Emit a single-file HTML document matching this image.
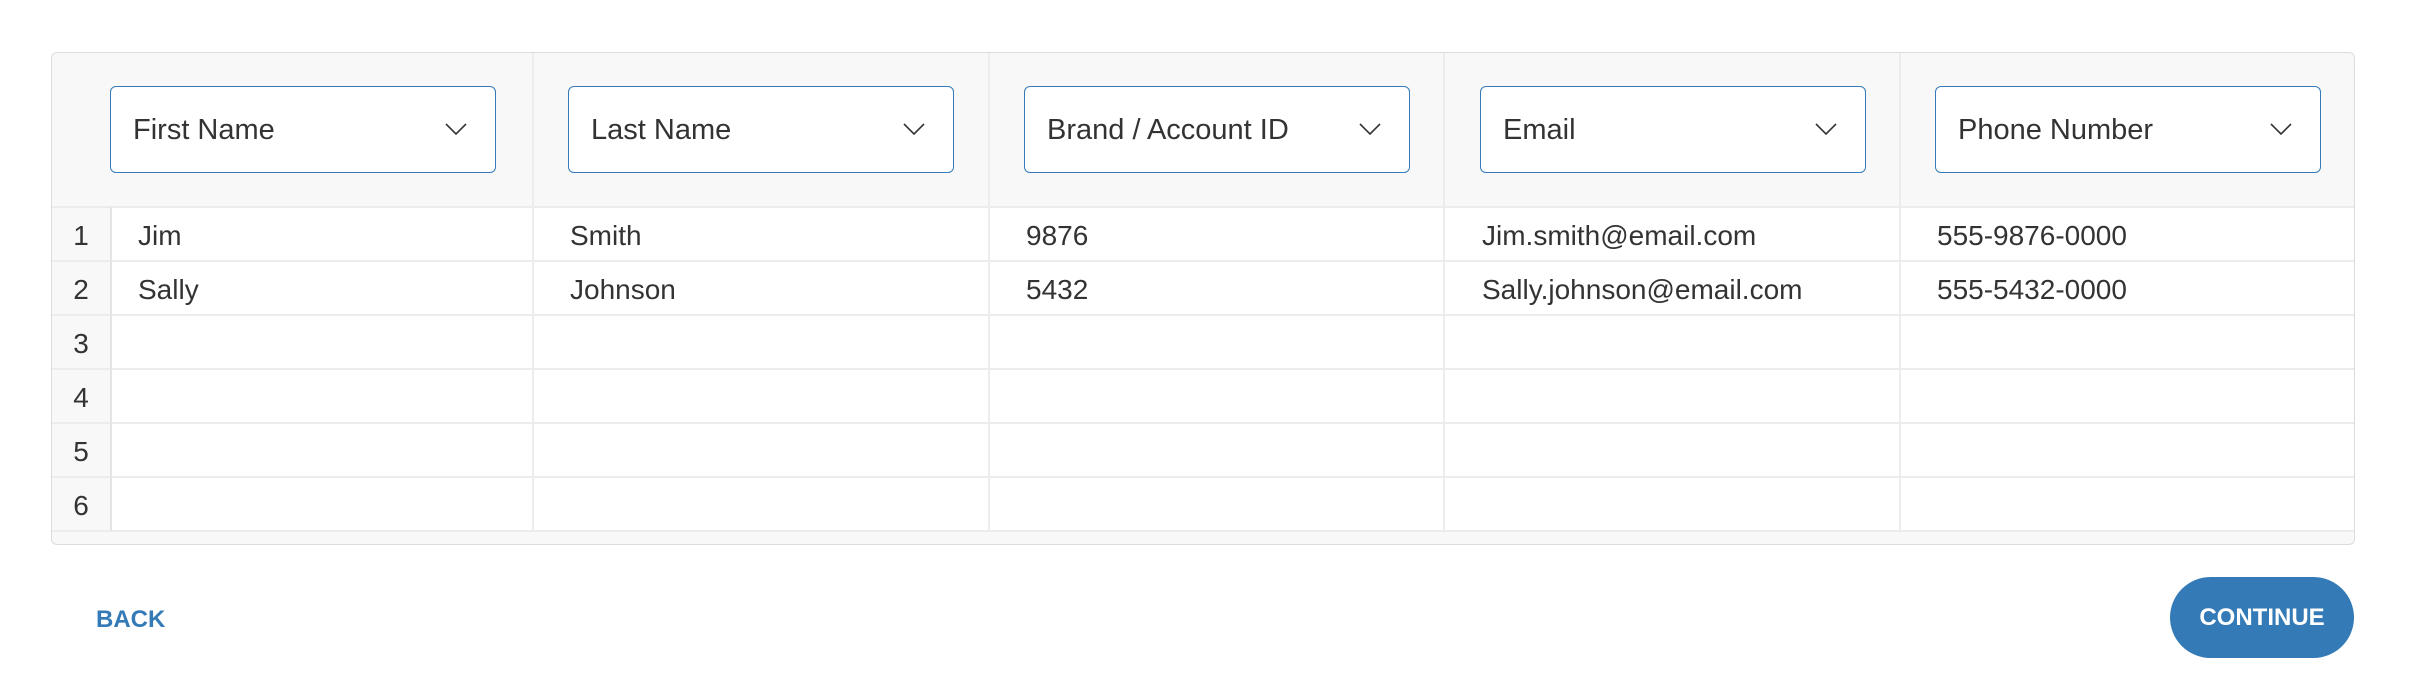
<!DOCTYPE html>
<html><head><style>
body{margin:0;width:2428px;height:684px;background:#fff;font-family:"Liberation Sans",sans-serif;color:#333;position:relative;overflow:hidden}
.tbl{position:absolute;left:51px;top:52px;width:2302px;height:491px;border:1.5px solid #dcdcdc;border-radius:6px;background:#f8f8f8;overflow:hidden}
.a{position:absolute}
.hl{position:absolute;left:0;right:0;height:2px;background:#ececec}
.vl{position:absolute;width:2px;background:#ececec}
.dd{position:absolute;top:33px;width:386px;height:87px;border:1.5px solid #337ab7;border-radius:6px;background:#fff;box-sizing:border-box}
.dd span{position:absolute;left:22px;top:27px;font-size:29px}
.dd svg{position:absolute;right:28px;top:36px}
.cell{position:absolute;font-size:28px}
.num{position:absolute;left:0;width:58px;text-align:center;font-size:28px}
</style></head><body>
<div class="tbl">
 <div class="a" style="left:58px;top:154px;right:0;height:324px;background:#fff"></div>
 <div class="hl" style="top:153px"></div>
 <div class="hl" style="top:207px;left:0"></div>
 <div class="hl" style="top:261px"></div>
 <div class="hl" style="top:315px"></div>
 <div class="hl" style="top:369px"></div>
 <div class="hl" style="top:423px"></div>
 <div class="hl" style="top:477px"></div>
 <div class="vl" style="left:58px;top:154px;height:324px;background:#e4e4e4"></div>
 <div class="vl" style="left:480px;top:0;height:478px"></div>
 <div class="vl" style="left:936px;top:0;height:478px"></div>
 <div class="vl" style="left:1391px;top:0;height:478px"></div>
 <div class="vl" style="left:1847px;top:0;height:478px"></div>

 <div class="dd" style="left:58px"><span>First Name</span><svg width="22" height="12" viewBox="0 0 22 12"><path d="M1 1L11 11L21 1" fill="none" stroke="#333" stroke-width="1.6"/></svg></div>
 <div class="dd" style="left:516px"><span>Last Name</span><svg width="22" height="12" viewBox="0 0 22 12"><path d="M1 1L11 11L21 1" fill="none" stroke="#333" stroke-width="1.6"/></svg></div>
 <div class="dd" style="left:972px"><span>Brand / Account ID</span><svg width="22" height="12" viewBox="0 0 22 12"><path d="M1 1L11 11L21 1" fill="none" stroke="#333" stroke-width="1.6"/></svg></div>
 <div class="dd" style="left:1428px"><span>Email</span><svg width="22" height="12" viewBox="0 0 22 12"><path d="M1 1L11 11L21 1" fill="none" stroke="#333" stroke-width="1.6"/></svg></div>
 <div class="dd" style="left:1883px"><span>Phone Number</span><svg width="22" height="12" viewBox="0 0 22 12"><path d="M1 1L11 11L21 1" fill="none" stroke="#333" stroke-width="1.6"/></svg></div>

 <div class="num" style="top:167px">1</div>
 <div class="num" style="top:221px">2</div>
 <div class="num" style="top:275px">3</div>
 <div class="num" style="top:329px">4</div>
 <div class="num" style="top:383px">5</div>
 <div class="num" style="top:437px">6</div>

 <div class="cell" style="left:86px;top:167px">Jim</div>
 <div class="cell" style="left:518px;top:167px">Smith</div>
 <div class="cell" style="left:974px;top:167px">9876</div>
 <div class="cell" style="left:1430px;top:167px">Jim.smith@email.com</div>
 <div class="cell" style="left:1885px;top:167px">555-9876-0000</div>
 <div class="cell" style="left:86px;top:221px">Sally</div>
 <div class="cell" style="left:518px;top:221px">Johnson</div>
 <div class="cell" style="left:974px;top:221px">5432</div>
 <div class="cell" style="left:1430px;top:221px">Sally.johnson@email.com</div>
 <div class="cell" style="left:1885px;top:221px">555-5432-0000</div>
</div>
<div class="a" style="left:96px;top:606px;font-size:24px;font-weight:bold;color:#337ab7">BACK</div>
<div class="a" style="left:2170px;top:577px;width:184px;height:81px;border-radius:41px;background:#337ab7;color:#fff;font-size:24px;font-weight:bold;text-align:center;line-height:81px">CONTINUE</div>
</body></html>
